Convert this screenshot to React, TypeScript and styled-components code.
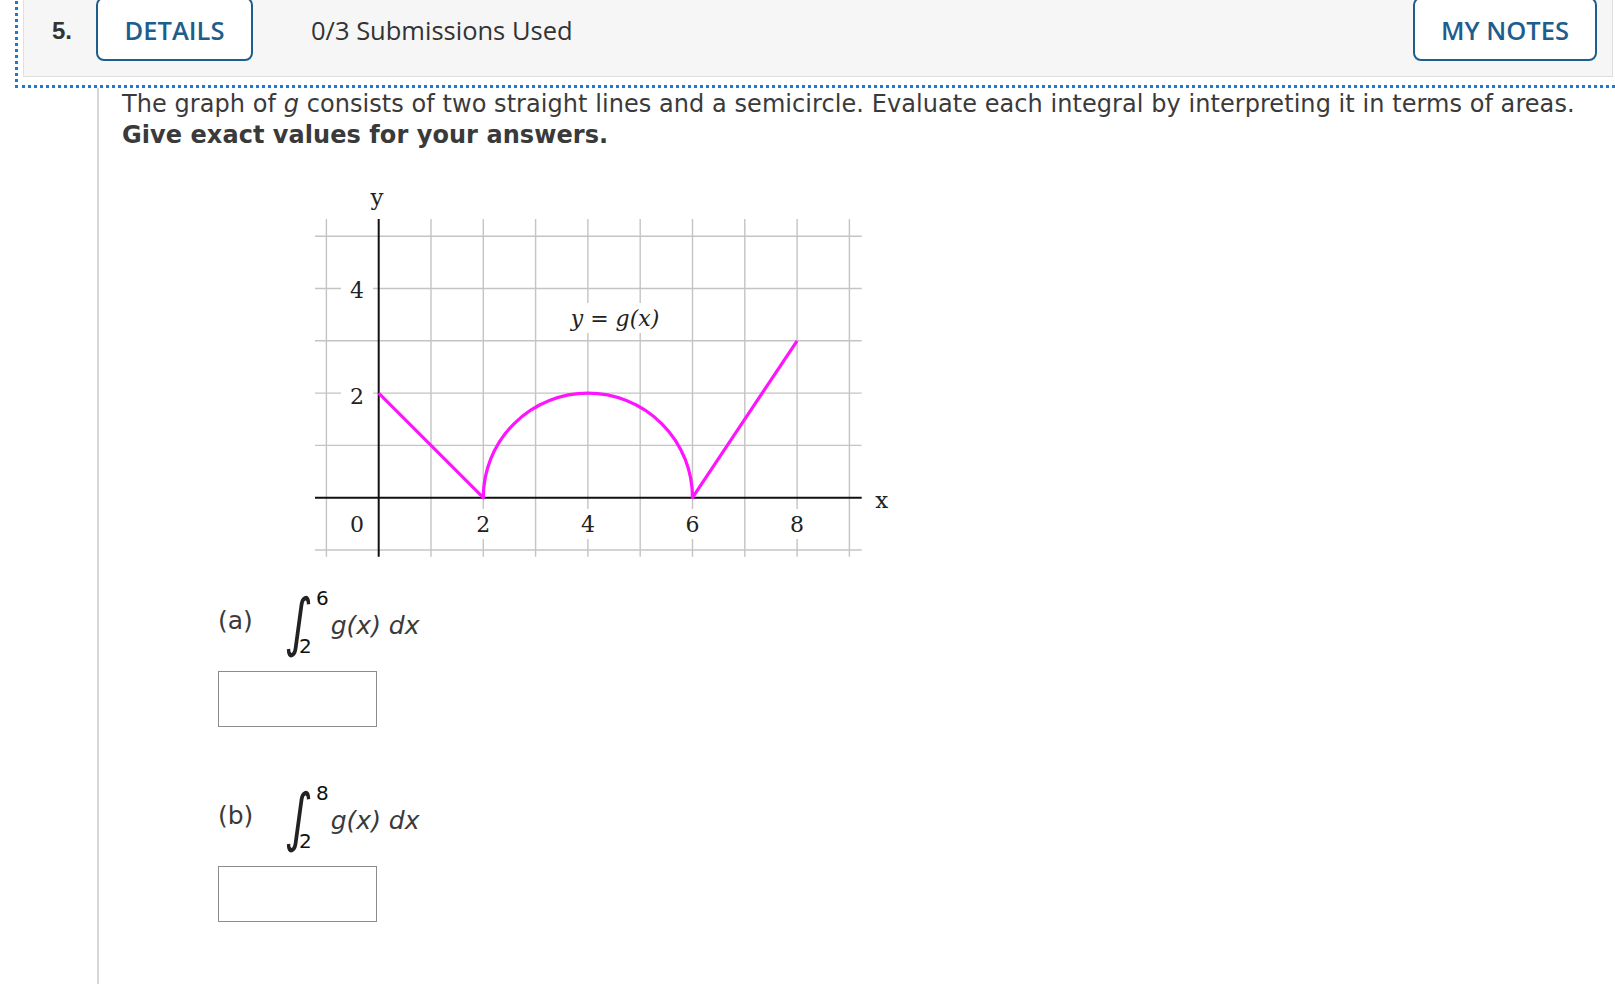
import React from "react";
import styled, { createGlobalStyle } from "styled-components";

const GlobalStyle = createGlobalStyle`
  html, body { margin: 0; padding: 0; background: #ffffff; }
  body {
    font-family: "DejaVu Sans", Verdana, sans-serif;
    color: #333333;
    overflow: hidden;
  }
  * { box-sizing: border-box; }
`;

const Page = styled.div`
  width: 1615px;
  height: 984px;
  overflow: hidden;
  padding-left: 15px;
`;

const HeaderFrame = styled.div`
  margin-top: -10px;
  border-left: 3px dotted #1f78d1;
  border-bottom: 3px dotted #1f78d1;
  padding: 0 2px 8px 5px;
`;

const Header = styled.div`
  display: flex;
  align-items: center;
  background: #f6f6f6;
  border-left: 1px solid #e0e0e0;
  border-right: 1px solid #dedede;
  border-bottom: 1px solid #dedede;
  padding: 7px 15px 15px 28px;
`;

const QNumber = styled.span`
  font-family: "Liberation Sans", Arial, sans-serif;
  font-weight: 700;
  font-size: 24px;
  color: #333333;
  width: 44px;
  flex: none;
  padding-top: 4px;
`;

const OutlineButton = styled.button<{ $width: number }>`
  width: ${(p) => p.$width}px;
  height: 64px;
  flex: none;
  background: #ffffff;
  border: 2px solid #1d5e8c;
  border-radius: 8px;
  font-family: "Open Sans", sans-serif;
  font-weight: 600;
  font-size: 25.5px;
  color: #1d5e8c;
  padding: 0;
  padding-top: 2px;
  cursor: pointer;
`;

const Submissions = styled.span`
  font-family: "Open Sans", sans-serif;
  font-size: 25.5px;
  color: #333333;
  margin-left: 58px;
  flex: 1;
  padding-top: 2px;
`;

const Body = styled.div`
  margin-left: 82px;
  border-left: 2px solid #d6d6d6;
  padding-left: 23px;
  height: 1000px;
`;

const Prompt = styled.p`
  margin: 0;
  padding-top: 1px;
  font-size: 24px;
  letter-spacing: 0.06px;
  line-height: 31px;
  color: #3a3a3a;
  white-space: nowrap;
`;

const Emph = styled.strong`
  display: block;
  font-weight: 700;
`;

const GraphFigure = styled.div`
  margin: 29px 0 0 178px;
  width: 600px;
  height: 380px;
`;

const Parts = styled.div`
  margin-left: 96px;
  display: flex;
  flex-direction: column;
`;

const MathRow = styled.div<{ $gap: number }>`
  display: flex;
  align-items: center;
  height: 60px;
  margin-top: ${(p) => p.$gap}px;
`;

const PartLabel = styled.span`
  font-size: 25px;
  color: #3a3a3a;
  width: 69px;
  flex: none;
  margin-top: -3px;
`;

const IntegralSign = styled.span`
  font-family: "DejaVu Sans", sans-serif;
  font-size: 44px;
  line-height: 60px;
  height: 60px;
  width: 24px;
  text-align: center;
  color: #222222;
  flex: none;
  transform: scale(1.05, 1.45) skewX(-8deg);
  transform-origin: 50% 50%;
`;

const Limits = styled.span`
  display: flex;
  flex-direction: column;
  justify-content: space-between;
  height: 68px;
  margin-left: -12px;
  font-size: 20px;
  line-height: 20px;
  color: #111111;
  flex: none;
`;

const Upper = styled.span`
  padding-left: 17px;
`;

const Lower = styled.span`
  padding-left: 0;
`;

const Expr = styled.span`
  font-size: 25px;
  font-style: italic;
  color: #3a3a3a;
  margin-left: 2px;
  padding-top: 6px;
`;

const AnswerBox = styled.input<{ $top: number }>`
  display: block;
  width: 159px;
  height: 56px;
  margin-top: ${(p) => p.$top}px;
  border: 1px solid #8c8c8c;
  border-radius: 0;
  background: #ffffff;
  padding: 0 8px;
  font-size: 20px;
  outline: none;
`;

const U = 52.3;
const OX = 78.7;
const OY = 317.7;
const X = (x: number) => OX + U * x;
const Y = (y: number) => OY - U * y;

const GRID = "#c4c4c4";
const LABEL_FONT = "'DejaVu Serif', 'Liberation Serif', serif";

function TickLabel({ x, y, text }: { x: number; y: number; text: string }) {
  return (
    <g>
      <rect x={x - 16} y={y - 15} width={32} height={30} fill="#ffffff" />
      <text
        x={x}
        y={y}
        textAnchor="middle"
        dominantBaseline="central"
        fontFamily={LABEL_FONT}
        fontSize={22}
        fill="#222"
      >
        {text}
      </text>
    </g>
  );
}

function Graph() {
  const xs = [-1, 1, 2, 3, 4, 5, 6, 7, 8, 9];
  const ys = [-1, 1, 2, 3, 4, 5];
  const curve = `M ${X(0)} ${Y(2)} L ${X(2)} ${Y(0)} A ${2 * U} ${2 * U} 0 0 1 ${X(6)} ${Y(0)} L ${X(8)} ${Y(3)}`;
  return (
    <svg width={600} height={380} viewBox="0 0 600 380">
      {xs.map((x) => (
        <line key={"v" + x} x1={X(x)} x2={X(x)} y1={39} y2={376.7} stroke={GRID} strokeWidth={1.4} />
      ))}
      {ys.map((y) => (
        <line key={"h" + y} x1={15} x2={561.7} y1={Y(y)} y2={Y(y)} stroke={GRID} strokeWidth={1.4} />
      ))}
      <TickLabel x={57} y={Y(4) + 2} text="4" />
      <TickLabel x={57} y={Y(2) + 3} text="2" />
      <TickLabel x={57} y={344} text="0" />
      <TickLabel x={X(2)} y={344} text="2" />
      <TickLabel x={X(4)} y={344} text="4" />
      <TickLabel x={X(6)} y={344} text="6" />
      <TickLabel x={X(8)} y={344} text="8" />
      <rect x={266} y={123} width={98} height={30} fill="#ffffff" />
      <text
        x={315}
        y={138}
        textAnchor="middle"
        dominantBaseline="central"
        fontFamily={LABEL_FONT}
        fontSize={22}
        fontStyle="italic"
        fill="#222"
      >
        y = g(x)
      </text>
      <line x1={OX} x2={OX} y1={39} y2={376.7} stroke="#111" strokeWidth={2} />
      <line x1={15} x2={561.7} y1={OY} y2={OY} stroke="#111" strokeWidth={2} />
      <text x={77} y={16.7} textAnchor="middle" dominantBaseline="central" fontFamily={LABEL_FONT} fontSize={23} fill="#222">
        y
      </text>
      <text x={581.7} y={320} textAnchor="middle" dominantBaseline="central" fontFamily={LABEL_FONT} fontSize={23} fill="#222">
        x
      </text>
      <path d={curve} fill="none" stroke="#ff14ff" strokeWidth={3.2} strokeLinejoin="round" />
    </svg>
  );
}

function Part({
  label,
  upper,
  lower,
  gap,
}: {
  label: string;
  upper: string;
  lower: string;
  gap: number;
}) {
  return (
    <>
      <MathRow $gap={gap}>
        <PartLabel>{label}</PartLabel>
        <IntegralSign>∫</IntegralSign>
        <Limits>
          <Upper>{upper}</Upper>
          <Lower>{lower}</Lower>
        </Limits>
        <Expr>g(x) dx</Expr>
      </MathRow>
      <AnswerBox $top={19} type="text" aria-label={`answer ${label}`} />
    </>
  );
}

export default function App() {
  return (
    <Page>
      <GlobalStyle />
      <HeaderFrame>
        <Header>
          <QNumber>5.</QNumber>
          <OutlineButton $width={157}>DETAILS</OutlineButton>
          <Submissions>0/3 Submissions Used</Submissions>
          <OutlineButton $width={184}>MY NOTES</OutlineButton>
        </Header>
      </HeaderFrame>
      <Body>
        <Prompt>
          The graph of <i>g</i> consists of two straight lines and a semicircle. Evaluate each integral by
          interpreting it in terms of areas.
          <Emph>Give exact values for your answers.</Emph>
        </Prompt>
        <GraphFigure>
          <Graph />
        </GraphFigure>
        <Parts>
          <Part label="(a)" upper="6" lower="2" gap={32} />
          <Part label="(b)" upper="8" lower="2" gap={60} />
        </Parts>
      </Body>
    </Page>
  );
}
